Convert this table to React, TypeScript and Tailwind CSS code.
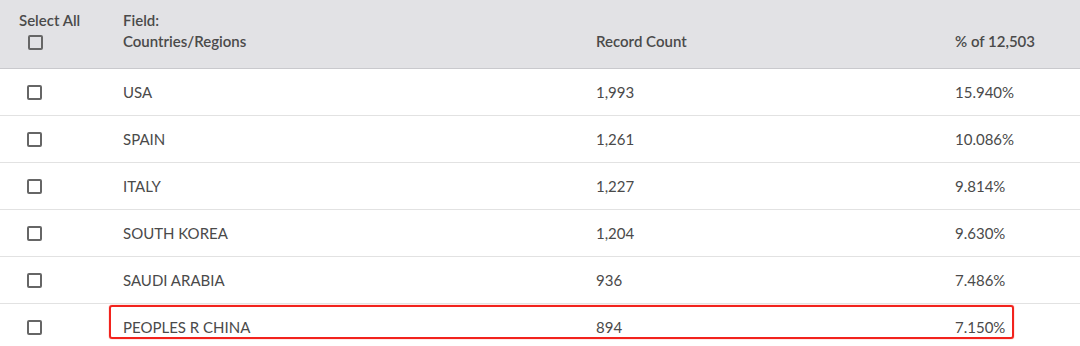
const rows = [
  { name: "USA", count: "1,993", pct: "15.940%" },
  { name: "SPAIN", count: "1,261", pct: "10.086%" },
  { name: "ITALY", count: "1,227", pct: "9.814%" },
  { name: "SOUTH KOREA", count: "1,204", pct: "9.630%" },
  { name: "SAUDI ARABIA", count: "936", pct: "7.486%" },
  { name: "PEOPLES R CHINA", count: "894", pct: "7.150%", marked: true },
];

const Checkbox = () => (
  <span className="block w-[15px] h-[15px] border-2 border-[#666] rounded-[2px]" />
);

const cols = "grid grid-cols-[104px_473px_359px_1fr]";

export default function App() {
  return (
    <div
      className="w-[1080px] h-[346px] overflow-hidden bg-white text-[15px] text-[#4a4a4a]"
      style={{ fontFamily: "Lato, 'Open Sans', sans-serif" }}
    >
      <div className={`${cols} h-[69px] bg-[#e2e2e5] border-b border-[#c9c9cd] font-semibold leading-[21px]`}>
        <div className="pl-[19px] pt-[10px]">
          <div>Select All</div>
          <div className="mt-[4px] ml-[9px]">
            <Checkbox />
          </div>
        </div>
        <div className="pl-[19px] pt-[10px]">
          <div>Field:</div>
          <div>Countries/Regions</div>
        </div>
        <div className="pl-[19px] pt-[31px]">Record Count</div>
        <div className="pl-[19px] pt-[31px]">% of 12,503</div>
      </div>

      {rows.map((r) => (
        <div
          key={r.name}
          className={`${cols} relative h-[47px] border-b border-[#e2e2e2] items-center`}
        >
          <div className="pl-[27px]">
            <Checkbox />
          </div>
          <div className="pl-[19px]">{r.name}</div>
          <div className="pl-[19px]">{r.count}</div>
          <div className="pl-[19px]">{r.pct}</div>
          {r.marked && (
            <div className="absolute left-[109px] top-[1px] w-[905px] h-[34px] border-2 border-[#f2231d] rounded-[3px] shadow-[0_0_1px_#f2231d]" />
          )}
        </div>
      ))}
    </div>
  );
}
